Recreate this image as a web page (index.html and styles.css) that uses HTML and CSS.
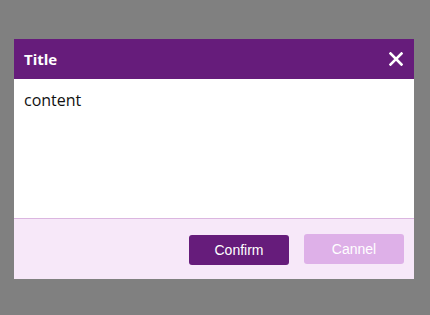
FILE: index.html
```html
<!DOCTYPE html>
<html>
<head>
<meta charset="utf-8">
<link rel="stylesheet" href="styles.css">
</head>
<body>
<div class="overlay">
  <div class="dialog">
    <div class="dialog-header">
      <span class="dialog-title">Title</span>
      <span class="dialog-close">
        <svg width="14" height="14" viewBox="0 0 14 14"><path d="M1.5 1.5 L12.5 12.5 M12.5 1.5 L1.5 12.5" stroke="#fff" stroke-width="2.6" stroke-linecap="square"/></svg>
      </span>
    </div>
    <div class="dialog-body">content</div>
    <div class="dialog-footer">
      <button class="btn btn-confirm">Confirm</button>
      <button class="btn btn-cancel">Cannel</button>
    </div>
  </div>
</div>
</body>
</html>
```

FILE: styles.css
```css
html, body {
  margin: 0;
  padding: 0;
  background: #808080;
}
.overlay {
  width: 430px;
  height: 315px;
  padding: 39px 0 0 14px;
  box-sizing: border-box;
}
.dialog {
  width: 400px;
  height: 240px;
  background: #fff;
  display: flex;
  flex-direction: column;
}
.dialog-header {
  height: 40px;
  background: #661c7b;
  display: flex;
  align-items: center;
  justify-content: space-between;
  padding: 0 10px;
  box-sizing: border-box;
}
.dialog-title {
  color: #fff;
  font-family: "Open Sans", sans-serif;
  font-weight: 700;
  font-size: 15px;
}
.dialog-close {
  display: flex;
  align-items: center;
  margin-right: 1px;
}
.dialog-body {
  flex: 1;
  padding: 10px 10px;
  font-family: "Open Sans", sans-serif;
  font-size: 16px;
  color: #111;
}
.dialog-footer {
  height: 61px;
  background: #f7e8f9;
  border-top: 1px solid #dbb6e0;
  display: flex;
  justify-content: flex-end;
  align-items: center;
  gap: 15px;
  padding: 0 10px;
  box-sizing: border-box;
}
.btn {
  width: 100px;
  height: 30px;
  border: none;
  border-radius: 3px;
  font-family: "Liberation Sans", Arial, sans-serif;
  font-size: 14px;
  color: #fff;
  padding: 0;
}
.btn-confirm {
  background: #661c7b;
  margin-top: 2px;
}
.btn-cancel {
  background: #deb0e8;
}
```
